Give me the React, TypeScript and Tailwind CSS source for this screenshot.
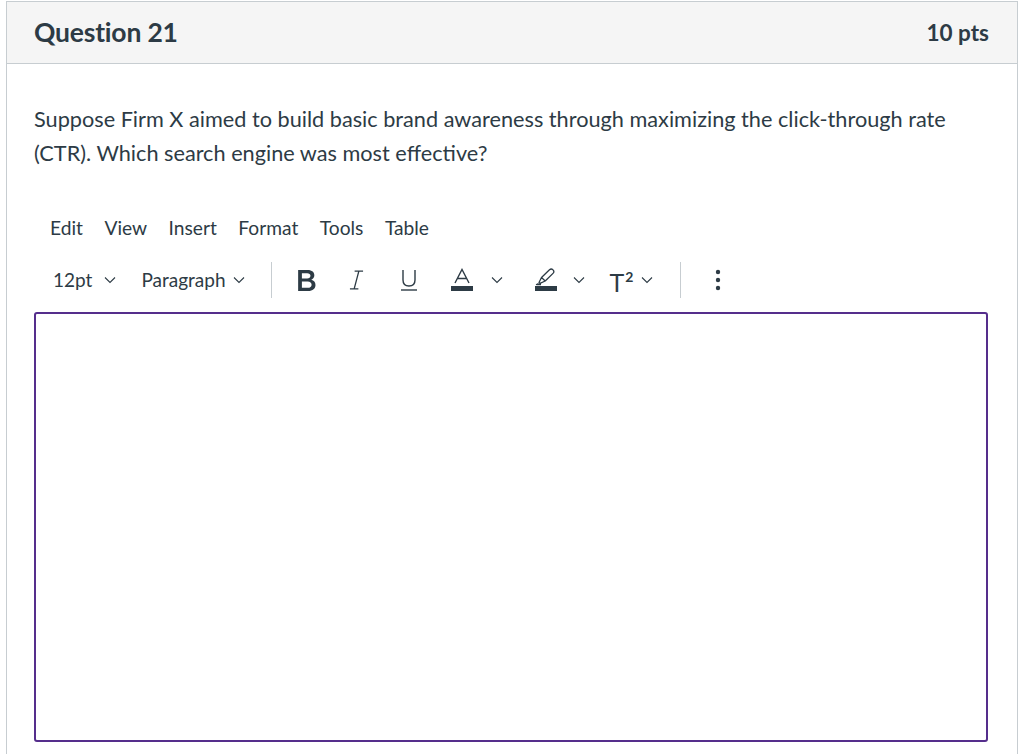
import React from "react";

const Chevron = ({ className = "" }: { className?: string }) => (
  <svg viewBox="0 0 12 8" className={`w-[12px] h-[8px] ${className}`} fill="none">
    <path d="M1 1.5 L6 6.5 L11 1.5" stroke="#2d3b45" strokeWidth="1.1" />
  </svg>
);

const menu = ["Edit", "View", "Insert", "Format", "Tools", "Table"];

const App = () => {
  return (
    <div className="w-[1024px] h-[754px] overflow-hidden bg-white pt-[1px] pl-[6px] pr-[6px] text-[#2d3b45] font-['Lato','Noto_Sans',sans-serif]">
      <div className="border border-[#c7cdd1] border-b-0 h-[800px]">
        {/* header */}
        <div className="h-[62px] bg-[#f5f5f5] border-b border-[#c7cdd1] flex items-center justify-between pl-[27px] pr-[28px]">
          <h2 className="text-[26.5px] font-bold tracking-[-0.2px]">Question 21</h2>
          <span className="text-[22.5px] font-bold">10 pts</span>
        </div>

        <div className="pl-[27px] pr-[28px]">
          <p className="mt-[38px] text-[21.7px] leading-[34px]">
            Suppose Firm X aimed to build basic brand awareness through maximizing the click-through rate (CTR). Which search engine was most effective?
          </p>

          {/* menu bar */}
          <div className="mt-[41px] flex items-center gap-[21.5px] pl-[16px] h-[34px] text-[19.2px]">
            {menu.map((m) => (
              <span key={m}>{m}</span>
            ))}
          </div>

          {/* toolbar */}
          <div className="mt-[17px] flex items-center h-[36px] pl-[19px] text-[19px]">
            <span>12pt</span>
            <Chevron className="ml-[12px]" />
            <span className="ml-[25px]">Paragraph</span>
            <Chevron className="ml-[7px]" />
            <div className="ml-[26px] w-[1px] h-[36px] bg-[#c7cdd1]" />
            {/* Bold */}
            <svg viewBox="0 0 20 22" className="ml-[24px] w-[21px] h-[23px]">
              <path
                d="M2 1 H11 C15.5 1 17.5 3.2 17.5 6 C17.5 8.2 16.3 9.6 14.6 10.3 C17 10.9 18.6 12.7 18.6 15.2 C18.6 18.6 16 21 11.6 21 H2 Z M5.6 4 V9 H10.6 C12.6 9 13.8 8 13.8 6.5 C13.8 5 12.6 4 10.6 4 Z M5.6 11.9 V18 H11.1 C13.5 18 14.9 16.9 14.9 15 C14.9 13.1 13.5 11.9 11.1 11.9 Z"
                fill="#2d3b45"
                fillRule="evenodd"
              />
            </svg>
            {/* Italic */}
            <svg viewBox="0 0 16 22" className="ml-[32px] w-[15px] h-[22px]" fill="none" stroke="#2d3b45" strokeWidth="1.4">
              <path d="M6 1.5 H15 M1 20.5 H10 M10.5 1.5 L5.5 20.5" />
            </svg>
            {/* Underline */}
            <svg viewBox="0 0 18 22" className="ml-[36px] w-[18px] h-[22px]" fill="none" stroke="#2d3b45" strokeWidth="1.4">
              <path d="M3 1 V11 C3 15 5.5 17 9 17 C12.5 17 15 15 15 11 V1" />
              <path d="M1 21 H17" />
            </svg>
            {/* Text color */}
            <svg viewBox="0 0 22 24" className="ml-[33px] w-[22px] h-[24px]" fill="none">
              <path d="M4 15 L11 1.5 L18 15 M6.5 10.5 H15.5" stroke="#2d3b45" strokeWidth="1.4" />
              <rect x="0" y="18" width="22" height="5" fill="#2d3b45" />
            </svg>
            <Chevron className="ml-[18px]" />
            {/* Highlight */}
            <svg viewBox="0 0 22 24" className="ml-[32px] w-[22px] h-[24px]" fill="none">
              <path
                d="M4 14.5 L6.5 9.5 L14.5 1.8 C15.5 0.9 17 0.9 18 1.9 C19 2.9 19 4.4 18 5.4 L10.2 13 L5 15.3 Z M6.5 9.5 L10.2 13 M3.5 15.5 L1.5 16.5 H6"
                stroke="#2d3b45"
                strokeWidth="1.3"
                strokeLinejoin="round"
              />
              <rect x="0" y="18" width="22" height="5" fill="#2d3b45" />
            </svg>
            <Chevron className="ml-[16px]" />
            {/* superscript */}
            <span className="ml-[25px] w-[24px] text-[25px] leading-none relative top-[2px]">
              T<sup className="text-[14px] font-bold -top-[10px] ml-[1px]">2</sup>
            </span>
            <Chevron className="ml-[7px]" />
            <div className="ml-[27px] w-[1px] h-[36px] bg-[#c7cdd1]" />
            <svg viewBox="0 0 6 22" className="ml-[34px] w-[6px] h-[22px]">
              <circle cx="3" cy="3" r="2.2" fill="#2d3b45" />
              <circle cx="3" cy="11" r="2.2" fill="#2d3b45" />
              <circle cx="3" cy="19" r="2.2" fill="#2d3b45" />
            </svg>
          </div>

          {/* editor */}
          <div className="mt-[14px] h-[430px] w-[954px] border-2 border-[#552e8c] rounded-[3px]" />
        </div>
      </div>
    </div>
  );
};

export default App;
